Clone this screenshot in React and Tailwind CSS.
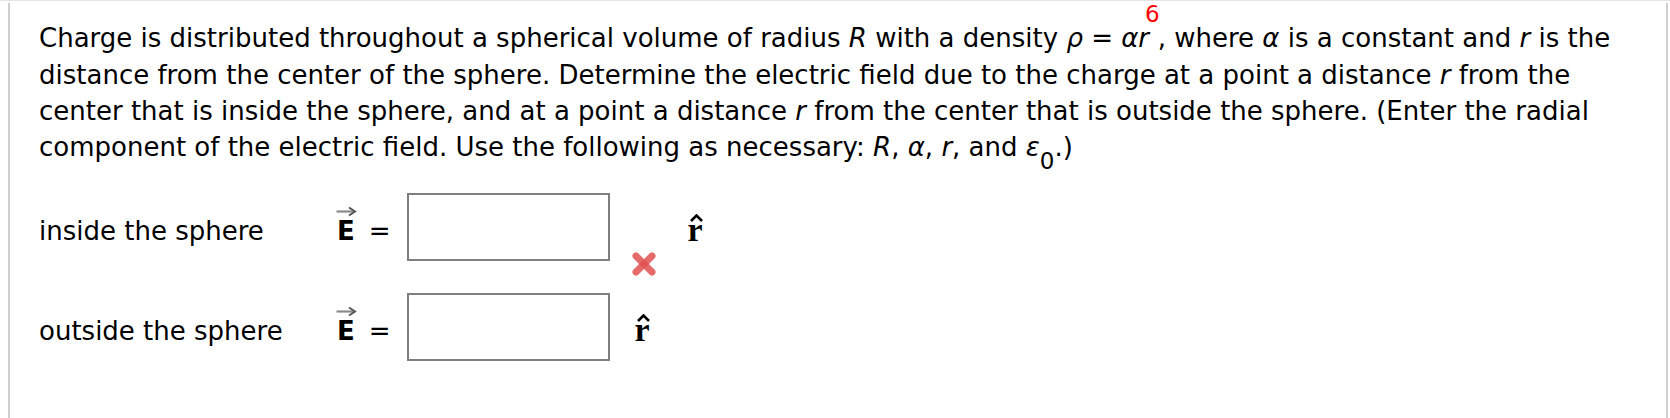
import React from "react";

function VecE() {
  return (
    <span className="relative inline-block font-bold">
      <svg className="absolute left-[-1px] top-[-7px]" width="21" height="11" viewBox="0 0 21 11">
        <line x1="0.5" y1="5.5" x2="17" y2="5.5" stroke="#8a8a8a" strokeWidth="2.2" />
        <path d="M13 1.5 L19 5.5 L13 9.5" fill="none" stroke="#555" strokeWidth="2" />
      </svg>
      E
    </span>
  );
}

function RHat({ className }) {
  return (
    <div
      className={"relative font-bold text-[34px] leading-[34px] text-black " + className}
      style={{ fontFamily: '"Liberation Serif", serif' }}
    >
      <svg className="absolute left-[2px] top-[1px]" width="13" height="8" viewBox="0 0 13 8">
        <path d="M1 7 L6.5 1.5 L12 7" fill="none" stroke="#000" strokeWidth="2.6" />
      </svg>
      r
    </div>
  );
}

function XMark() {
  return (
    <svg width="26" height="26" viewBox="0 0 26 26">
      <g stroke="#e05050" strokeOpacity="0.85" strokeWidth="7" strokeLinecap="round">
        <line x1="5" y1="5" x2="21" y2="21" />
        <line x1="21" y1="5" x2="5" y2="21" />
      </g>
    </svg>
  );
}

export default function App() {
  const font = { fontFamily: '"DejaVu Sans", Verdana, sans-serif' };
  return (
    <div className="w-[1670px] h-[418px] bg-white border-t border-[#e4e4e4] overflow-hidden" style={font}>
      <div className="ml-[8px] mt-[2px] w-[1660px] h-[416px] border-l-2 border-r-2 border-[#cfcfcf] pl-[29px] pt-[17px] text-[26px] leading-[36px] text-black">
        <p className="whitespace-nowrap">
          Charge is distributed throughout a spherical volume of radius <i>R</i> with a density <i>ρ</i> = <i>αr</i>
          <span className="relative top-[-25px] ml-[-4px] mr-[-2px] text-[23px] text-[#ff0000]">6</span>, where <i>α</i> is a constant and <i>r</i> is the
          <br />
          distance from the center of the sphere. Determine the electric field due to the charge at a point a distance <i>r</i> from the
          <br />
          center that is inside the sphere, and at a point a distance <i>r</i> from the center that is outside the sphere. (Enter the radial
          <br />
          component of the electric field. Use the following as necessary: <i>R</i>, <i>α</i>, <i>r</i>, and <i>ε</i>
          <span className="relative top-[13px] text-[23px]">0</span>.)
        </p>
        <div className="mt-[27px] flex flex-col gap-[32px]">
          <div className="flex h-[68px] items-start">
            <span className="w-[298px] pt-[20px]">inside the sphere</span>
            <span className="pt-[20px]"><VecE /></span>
            <span className="pt-[20px] ml-[14px]">=</span>
            <div className="ml-[16px] w-[203px] h-[68px] border-2 border-[#7f7f7f] bg-white" />
            <span className="ml-[21px] mt-[58px]"><XMark /></span>
            <RHat className="ml-[31px] mt-[20px]" />
          </div>
          <div className="flex h-[68px] items-start">
            <span className="w-[298px] pt-[20px]">outside the sphere</span>
            <span className="pt-[20px]"><VecE /></span>
            <span className="pt-[20px] ml-[14px]">=</span>
            <div className="ml-[16px] w-[203px] h-[68px] border-2 border-[#7f7f7f] bg-white" />
            <RHat className="ml-[25px] mt-[20px]" />
          </div>
        </div>
      </div>
    </div>
  );
}
